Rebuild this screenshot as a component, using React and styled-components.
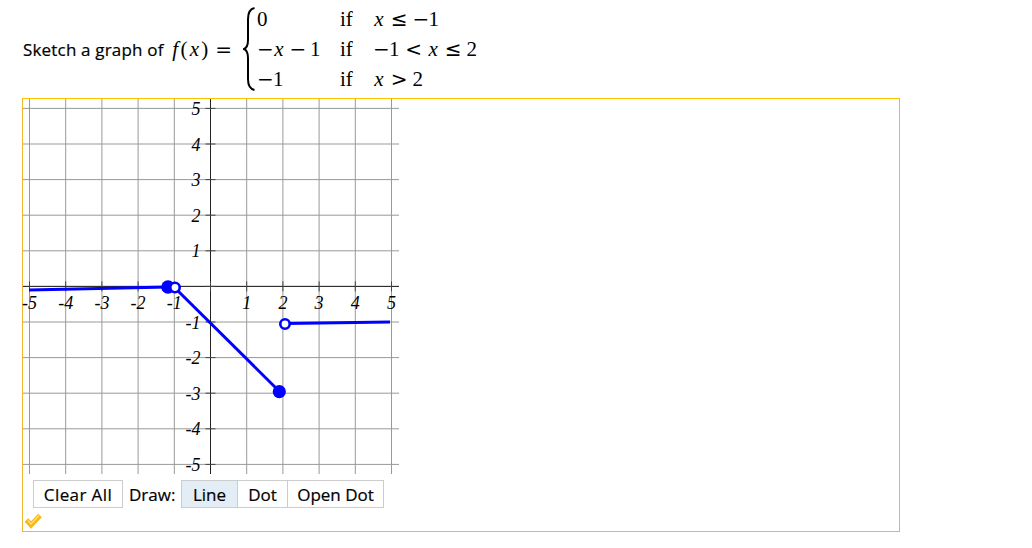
import React from "react";
import styled, { createGlobalStyle } from "styled-components";

const GlobalStyle = createGlobalStyle`
  body {
    margin: 0;
    background: #fff;
    color: #000;
    font-family: "Open Sans", "Noto Sans", sans-serif;
  }
`;

const Page = styled.div`
  width: 1032px;
  height: 548px;
  padding-left: 22px;
  box-sizing: border-box;
  overflow: hidden;
`;

const Question = styled.div`
  height: 98px;
  display: flex;
  align-items: center;
`;

const Prompt = styled.span`
  font-size: 17px;
  letter-spacing: 0.18px;
  -webkit-text-stroke: 0.2px #000;
  width: 149px;
  padding-left: 1px;
  box-sizing: border-box;
  white-space: nowrap;
`;

const MathText = styled.span`
  font-family: "Liberation Serif", serif;
  font-size: 21px;
  white-space: pre;
`;

const Var = styled.i`
  font-style: italic;
  padding: 0 1.3px;
`;

const Paren = styled.span`
  padding: 0 1px;
`;

// operators get the wide box and the gaps a math renderer gives them
const Sym = styled.span`
  display: inline-block;
  width: 16px;
  text-align: center;
  font-family: "DejaVu Sans", sans-serif;
  font-size: 20px;
  line-height: 20px;
  margin: 0 ${(p) => p.$gap || 0}px;
`;

const FunctionName = styled(MathText)`
  width: 72px;
`;

const Brace = styled.svg`
  width: 14px;
  height: 84px;
  flex: none;
`;

const Cases = styled.div`
  display: grid;
  grid-template-columns: 83px 33px auto;
  grid-auto-rows: 30px;
  align-items: center;
`;

const Board = styled.div`
  width: 878px;
  height: 434px;
  box-sizing: border-box;
  border: 1px solid #f0b630;
  border-top-color: #fcc200;
`;

const Plot = styled.svg`
  display: block;
  width: 376px;
  height: 375px;
  overflow: visible;
`;

const Tick = styled.text`
  font-family: "Liberation Serif", serif;
  font-style: italic;
  font-size: 18px;
  fill: #000;
`;

const Toolbar = styled.div`
  display: flex;
  align-items: center;
  margin: 6px 0 0 10px;
`;

const Button = styled.button`
  height: 28px;
  padding: 0;
  width: ${(p) => p.$w}px;
  margin-left: ${(p) => (p.$joined ? "-1px" : "0")};
  border: 1px solid #ccc;
  background: ${(p) => (p.$active ? "#e3edf6" : "#fff")};
  font-family: "Open Sans", "Noto Sans", sans-serif;
  font-size: 17px;
  letter-spacing: ${(p) => p.$track || 0}px;
  -webkit-text-stroke: 0.2px #000;
  color: #000;
`;

const DrawLabel = styled.span`
  font-size: 17px;
  -webkit-text-stroke: 0.2px #000;
  width: 58px;
  padding-left: 6px;
  box-sizing: border-box;
`;

const Check = styled.svg`
  display: block;
  width: 20px;
  height: 18px;
  margin: 3px 0 0 0;
`;

const xs = [-5, -4, -3, -2, -1, 0, 1, 2, 3, 4, 5];
const px = (v) => 187.5 + v * 36.2;
const py = (v) => 187.4 - v * 35.6;
const BLUE = "#0000ff";

const Graph = () => (
  <Plot viewBox="0 0 376 375">
    {xs.map((v) => (
      <line key={v} x1={px(v)} x2={px(v)} y1="0" y2="375" stroke="#999" />
    ))}
    {xs.map((v) => (
      <line key={v} y1={py(v)} y2={py(v)} x1="0" x2="376" stroke="#999" />
    ))}
    <line x1={px(0)} x2={px(0)} y1="0" y2="375" stroke="#222" />
    <line y1={py(0)} y2={py(0)} x1="0" x2="376" stroke="#222" />
    {xs.map((v) => (
      <line key={v} x1={px(v)} x2={px(v)} y1={py(0) - 5} y2={py(0) + 5} stroke="#444" />
    ))}
    {xs.map((v) => (
      <line key={v} y1={py(v)} y2={py(v)} x1={px(0) - 5} x2={px(0) + 5} stroke="#444" />
    ))}
    {xs.filter((v) => v !== 0).map((v) => (
      <Tick key={v} x={px(v)} y={py(0) + 23} textAnchor="middle">{v}</Tick>
    ))}
    {xs.filter((v) => v !== 0).map((v) => (
      <Tick key={v} x={px(0) - 10} y={py(v) + 6.5} textAnchor="end">{v}</Tick>
    ))}
    <g stroke={BLUE} strokeWidth="3" fill="none">
      <line x1="6" y1="191" x2="145" y2="188" />
      <line x1="152" y1="189" x2="256" y2="292" />
      <line x1="262" y1="224.5" x2="367" y2="223" />
    </g>
    <circle cx="145" cy="188" r="6.8" fill={BLUE} />
    <circle cx="152" cy="188.5" r="4.7" fill="#fff" stroke={BLUE} strokeWidth="2.6" />
    <circle cx="262" cy="225" r="4.7" fill="#fff" stroke={BLUE} strokeWidth="2.6" />
    <circle cx="256.3" cy="292.7" r="6.6" fill={BLUE} />
  </Plot>
);

const App = () => (
  <Page>
    <GlobalStyle />
    <Question>
      <Prompt>Sketch a graph of</Prompt>
      <FunctionName><Var>f</Var><Paren>(</Paren><Var>x</Var><Paren>)</Paren><Sym $gap={5.8}>=</Sym></FunctionName>
      <Brace viewBox="0 0 14 84">
        <path
          d="M11.5 1 C7 2 5 6 5 12 L5 33 C5 38 3.5 41 1 42 C3.5 43 5 46 5 51 L5 72 C5 78 7 82 11.5 83"
          fill="none"
          stroke="#000"
          strokeWidth="2"
        />
      </Brace>
      <Cases>
        <MathText>0</MathText>
        <MathText>if</MathText>
        <MathText><Var>x</Var><Sym $gap={5.8}>≤</Sym><Sym>−</Sym>1</MathText>
        <MathText><Sym>−</Sym><Var>x</Var><Sym $gap={4.6}>−</Sym>1</MathText>
        <MathText>if</MathText>
        <MathText><Sym>−</Sym>1<Sym $gap={5.8}>&lt;</Sym><Var>x</Var><Sym $gap={5.8}>≤</Sym>2</MathText>
        <MathText><Sym>−</Sym>1</MathText>
        <MathText>if</MathText>
        <MathText><Var>x</Var><Sym $gap={5.8}>&gt;</Sym>2</MathText>
      </Cases>
    </Question>
    <Board>
      <Graph />
      <Toolbar>
        <Button $w={90} $track={0.4}>Clear All</Button>
        <DrawLabel>Draw:</DrawLabel>
        <Button $w={57} $active>Line</Button>
        <Button $w={51} $joined>Dot</Button>
        <Button $w={97} $joined>Open Dot</Button>
      </Toolbar>
      <Check viewBox="0 0 20 18">
        <path d="M3.5 9 L8 14 L17 4.5" fill="none" stroke="#f8b81c" strokeWidth="5" />
        <path d="M5 9.5 L8 13 L16 4.5" fill="none" stroke="#ffe27a" strokeWidth="1.2" />
      </Check>
    </Board>
  </Page>
);

export default App;
